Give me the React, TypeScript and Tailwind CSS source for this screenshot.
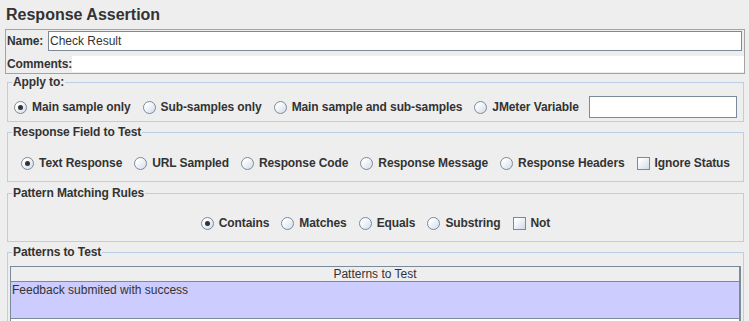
import React from "react";

const labelCls = "text-[12px] font-bold leading-[16px] tracking-[-0.1px] text-[#333333] whitespace-nowrap";

function Radio({ checked = false }: { checked?: boolean }) {
  return (
    <span className="flex h-[13px] w-[13px] shrink-0 items-center justify-center rounded-full border border-[#7a8a99] bg-[linear-gradient(135deg,#ffffff_20%,#d2dcea)]">
      {checked && <span className="h-[5px] w-[5px] rounded-full bg-[#333333]" />}
    </span>
  );
}

function Check() {
  return (
    <span className="block h-[13px] w-[13px] shrink-0 border border-[#7a8a99] bg-[linear-gradient(135deg,#ffffff_15%,#cfdae8)]" />
  );
}

function Option({ label, checked, box }: { label: string; checked?: boolean; box?: boolean }) {
  return (
    <div className="flex items-center gap-[5px]">
      {box ? <Check /> : <Radio checked={checked} />}
      <span className={labelCls}>{label}</span>
    </div>
  );
}

function Group({
  title,
  className = "",
  children,
}: {
  title: string;
  className?: string;
  children: React.ReactNode;
}) {
  return (
    <fieldset className={`ml-[7px] w-[737px] border border-[#b8cfe5] ${className}`}>
      <legend className={`ml-[4px] px-[1px] ${labelCls}`}>{title}</legend>
      {children}
    </fieldset>
  );
}

export default function App() {
  return (
    <div className="h-[321px] w-[749px] overflow-hidden bg-[#eeeeee] font-['Liberation_Sans',Arial,sans-serif] text-[#333333]">
      <div className="flex h-[29px] items-center pl-[6px] pt-[1px] text-[16px] font-bold leading-[20px] text-[#333333]">
        Response Assertion
      </div>

      <div className="ml-[5px] w-[740px] border border-[#a3a3a3] pb-[1px] pt-[1px]">
        <div className="flex h-[20px] items-center">
          <span className={`w-[42px] pl-[1px] ${labelCls}`}>Name:</span>
          <div className="mr-[2px] flex h-[20px] flex-1 items-center border border-[#7a8a99] bg-white pl-[1px] text-[12px] leading-[16px]">
            Check Result
          </div>
        </div>
        <div className="mt-[5px] flex h-[16px] items-center">
          <span className={`w-[66px] pl-[1px] ${labelCls}`}>Comments:</span>
          <div className="h-[16px] flex-1 bg-white" />
        </div>
      </div>

      <Group title="Apply to:">
        <div className="mb-[3px] mt-[6px] flex h-[22px] items-center justify-center gap-[12px]">
          <Option label="Main sample only" checked />
          <Option label="Sub-samples only" />
          <Option label="Main sample and sub-samples" />
          <Option label="JMeter Variable" />
          <div className="-ml-[2px] h-[22px] w-[148px] border border-[#7a8a99] bg-white" />
        </div>
      </Group>

      <Group title="Response Field to Test" className="mt-[2px]">
        <div className="mb-[8px] mt-[13px] flex h-[20px] items-center justify-center gap-[12px]">
          <Option label="Text Response" checked />
          <Option label="URL Sampled" />
          <Option label="Response Code" />
          <Option label="Response Message" />
          <Option label="Response Headers" />
          <Option label="Ignore Status" box />
        </div>
      </Group>

      <Group title="Pattern Matching Rules" className="mt-[3px]">
        <div className="mb-[8px] mt-[12px] flex h-[20px] items-center justify-center gap-[12px]">
          <Option label="Contains" checked />
          <Option label="Matches" />
          <Option label="Equals" />
          <Option label="Substring" />
          <Option label="Not" box />
        </div>
      </Group>

      <Group title="Patterns to Test" className="mt-[2px]">
        <div className="ml-[2px] mt-[6px] w-[731px] border-l border-r-2 border-t border-[#7a8a99]">
          <div className="flex h-[15px] items-center justify-center border-b border-[#7a8a99] bg-[#eeeeee] text-[12px] leading-[14px]">
            Patterns to Test
          </div>
          <div className="h-[37px] border-b border-[#7a8a99] bg-[#ccccff] pl-[1px] text-[12px] leading-[16px]">
            Feedback submited with success
          </div>
          <div className="h-[20px] bg-white" />
        </div>
      </Group>
    </div>
  );
}
